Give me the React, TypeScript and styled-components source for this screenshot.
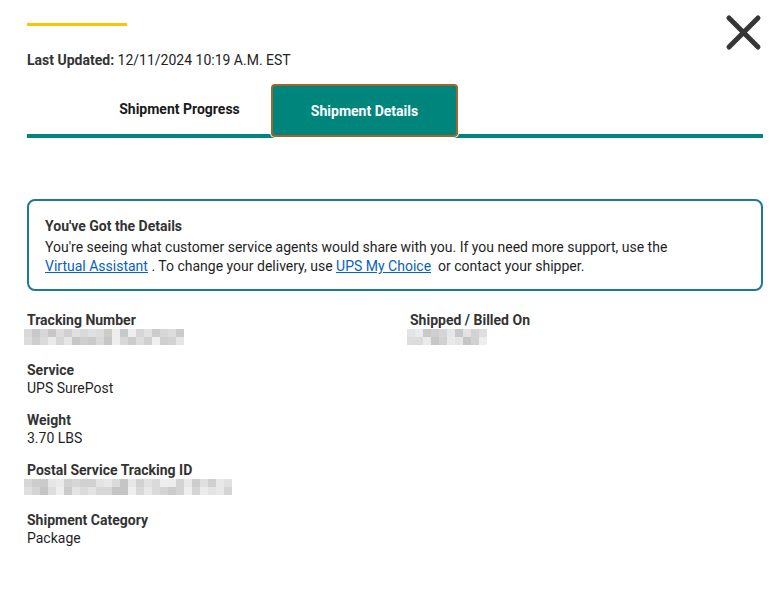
import styled, { createGlobalStyle } from 'styled-components';

const GlobalStyle = createGlobalStyle`
  body {
    margin: 0;
    background: #fff;
    font-family: Roboto, "Liberation Sans", sans-serif;
    color: #242424;
  }
`;

const Panel = styled.div`
  width: 770px;
  height: 600px;
  box-sizing: border-box;
  padding: 0 7px 0 27px;
`;

const TopRow = styled.div`
  display: flex;
  justify-content: space-between;
  align-items: flex-start;
  height: 50px;
`;

const Accent = styled.div`
  width: 100px;
  height: 3px;
  margin-top: 23px;
  background: #ffc400;
`;

const CloseButton = styled.button`
  border: 0;
  background: none;
  padding: 0;
  margin: 14px 1px 0 0;
  width: 37px;
  height: 37px;
  cursor: pointer;
`;

const Updated = styled.div`
  font-size: 14px;
  line-height: 20px;
  strong {
    font-weight: 700;
    color: #333;
  }
`;

const Tabs = styled.div`
  display: flex;
  margin-top: 14px;
  border-bottom: 4px solid #00857d;
  height: 50px;
`;

const Tab = styled.div<{ $active?: boolean }>`
  box-sizing: border-box;
  width: 187px;
  height: ${(p) => (p.$active ? '53px' : '50px')};
  margin-left: ${(p) => (p.$active ? '0' : '59px')};
  margin-right: ${(p) => (p.$active ? '0' : '-2px')};
  display: flex;
  align-items: center;
  justify-content: center;
  font-size: 14px;
  font-weight: 700;
  color: ${(p) => (p.$active ? '#fff' : '#1a1a1a')};
  background: ${(p) => (p.$active ? '#00857d' : 'transparent')};
  border: ${(p) => (p.$active ? '2px solid #a0652a' : '0')};
  border-radius: 4px;
  box-shadow: ${(p) => (p.$active ? '0 0 0 1px #fff' : 'none')};
  position: relative;
  z-index: 1;
`;

const InfoBox = styled.div`
  margin-top: 61px;
  border: 2px solid #1b7a99;
  border-radius: 8px;
  padding: 15px 16px 13px;
  font-size: 14px;
  line-height: 19px;
  color: #1f1f1f;
`;

const InfoTitle = styled.div`
  font-weight: 700;
  font-size: 14px;
  line-height: 20px;
  color: #333;
  margin-bottom: 2px;
`;

const Link = styled.a`
  color: #0662bb;
  text-decoration: underline;
`;

const Details = styled.div`
  display: grid;
  grid-template-columns: 383px 1fr;
  margin-top: 20px;
`;

const Column = styled.div`
  display: flex;
  flex-direction: column;
  gap: 14px;
`;

const Field = styled.div`
  font-size: 14px;
  line-height: 18px;
`;

const Label = styled.div`
  font-weight: 700;
  font-size: 14px;
  color: #333;
`;

const Value = styled.div`
  color: #1f1f1f;
`;

const Blur = styled.div`
  display: grid;
  grid-auto-flow: column;
  grid-template-rows: 8px 8px;
  margin: 0 0 2px -3px;
  width: max-content;
`;

const Cell = styled.div<{ $shade: number }>`
  width: 8px;
  height: 8px;
  background: ${(p) => `rgb(${p.$shade},${p.$shade},${p.$shade})`};
`;

function Pixelated({ cells, seed }: { cells: number; seed: number }) {
  const shades: number[] = [];
  let s = seed;
  for (let i = 0; i < cells * 2; i++) {
    s = (s * 9301 + 49297) % 233280;
    shades.push(196 + Math.floor((s / 233280) * 44));
  }
  return (
    <Blur>
      {shades.map((v, i) => (
        <Cell key={i} $shade={v} />
      ))}
    </Blur>
  );
}

export default function App() {
  return (
    <>
      <GlobalStyle />
      <Panel>
        <TopRow>
          <Accent />
          <CloseButton aria-label="Close">
            <svg width="37" height="37" viewBox="0 0 37 37">
              <path d="M4 4 L33 33 M33 4 L4 33" stroke="#363636" strokeWidth="5" strokeLinecap="round" />
            </svg>
          </CloseButton>
        </TopRow>
        <Updated>
          <strong>Last Updated:</strong> 12/11/2024 10:19 A.M. EST
        </Updated>
        <Tabs>
          <Tab>Shipment Progress</Tab>
          <Tab $active>Shipment Details</Tab>
        </Tabs>
        <InfoBox>
          <InfoTitle>You've Got the Details</InfoTitle>
          You're seeing what customer service agents would share with you. If you need more support, use the
          <br />
          <Link href="#">Virtual Assistant</Link> . To change your delivery, use <Link href="#">UPS My Choice</Link>{' '}
          &nbsp;or contact your shipper.
        </InfoBox>
        <Details>
          <Column>
            <Field>
              <Label>Tracking Number</Label>
              <Pixelated cells={20} seed={7} />
            </Field>
            <Field>
              <Label>Service</Label>
              <Value>UPS SurePost</Value>
            </Field>
            <Field>
              <Label>Weight</Label>
              <Value>3.70 LBS</Value>
            </Field>
            <Field>
              <Label>Postal Service Tracking ID</Label>
              <Pixelated cells={26} seed={31} />
            </Field>
            <Field>
              <Label>Shipment Category</Label>
              <Value>Package</Value>
            </Field>
          </Column>
          <Column>
            <Field>
              <Label>Shipped / Billed On</Label>
              <Pixelated cells={10} seed={13} />
            </Field>
          </Column>
        </Details>
      </Panel>
    </>
  );
}
